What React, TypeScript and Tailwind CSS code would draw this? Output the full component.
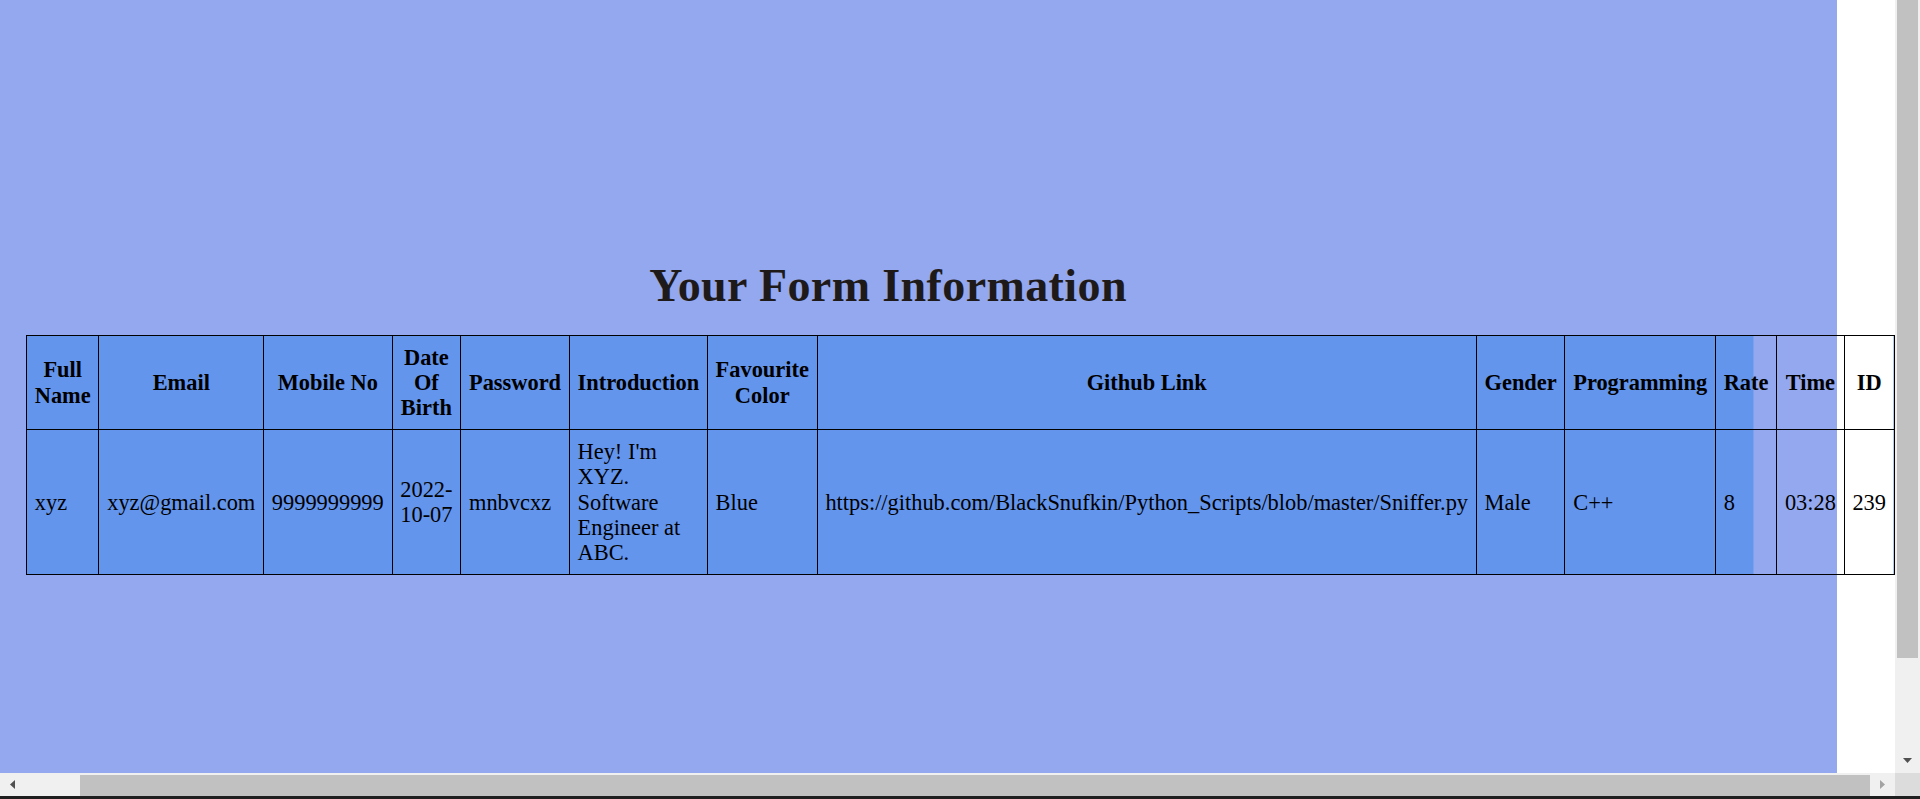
const headers = [
  "Full Name",
  "Email",
  "Mobile No",
  "Date Of Birth",
  "Password",
  "Introduction",
  "Favourite Color",
  "Github Link",
  "Gender",
  "Programming",
  "Rate",
  "Time",
  "ID",
]

const record = [
  "xyz",
  "xyz@gmail.com",
  "9999999999",
  "2022-10-07",
  "mnbvcxz",
  "Hey! I'm XYZ. Software Engineer at ABC.",
  "Blue",
  "https://github.com/BlackSnufkin/Python_Scripts/blob/master/Sniffer.py",
  "Male",
  "C++",
  "8",
  "03:28",
  "239",
]

function Arrow({ dir, color }: { dir: "left" | "right" | "down"; color: string }) {
  const points =
    dir === "left" ? "5,0 5,9 0,4.5" : dir === "right" ? "0,0 0,9 5,4.5" : "0,0 9,0 4.5,5"
  const w = dir === "down" ? 9 : 5
  const h = dir === "down" ? 5 : 9
  return (
    <svg width={w} height={h} viewBox={`0 0 ${w} ${h}`}>
      <polygon points={points} fill={color} />
    </svg>
  )
}

export default function App() {
  return (
    <div className="flex h-[799px] w-[1920px] flex-col overflow-hidden bg-white font-['Liberation_Serif','Times_New_Roman',serif] text-black">
      <div className="flex min-h-0 flex-1">
        {/* page */}
        <div className="min-w-0 flex-1 bg-white">
          <div className="h-full w-[1837px] bg-[#93a8ee] pt-[259px]">
            <h1 className="pr-[61px] text-center text-[46px] font-bold leading-[53px] tracking-[0.4px] text-[#1f1a1a]">
              Your Form Information
            </h1>

            <table className="ml-[26px] mt-[23px] w-px border-collapse bg-[linear-gradient(to_right,#6495ed_1727px,transparent_1727px)] text-[22.4px] leading-[25.35px]">
              <thead>
                <tr>
                  {headers.map((h) => (
                    <th key={h} className="border border-black px-[7.75px] py-[8.6px] text-center align-middle font-bold">
                      {h}
                    </th>
                  ))}
                </tr>
              </thead>
              <tbody>
                <tr>
                  {record.map((v, i) => (
                    <td key={i} className="border border-black px-[7.75px] py-[8.6px] text-left align-middle font-normal">
                      {v}
                    </td>
                  ))}
                </tr>
              </tbody>
            </table>
          </div>
        </div>

        {/* vertical scrollbar */}
        <div className="flex w-[25px] shrink-0 flex-col bg-[#f0f0f0]">
          <div className="mx-[2px] h-[658px] bg-[#c1c1c1]" />
          <div className="flex-1" />
          <div className="flex h-[25px] items-center justify-center">
            <Arrow dir="down" color="#505050" />
          </div>
        </div>
      </div>

      {/* horizontal scrollbar */}
      <div className="flex h-[23px] shrink-0 bg-[#f0f0f0]">
        <div className="flex w-[25px] items-center justify-center">
          <Arrow dir="left" color="#505050" />
        </div>
        <div className="ml-[55px] mt-[2px] w-[1790px] bg-[#c1c1c1]" />
        <div className="flex w-[25px] items-center justify-center">
          <Arrow dir="right" color="#a3a3a3" />
        </div>
        <div className="w-[25px] bg-[#dcdcdc]" />
      </div>
      <div className="h-[3px] shrink-0 bg-[#1f1f1f]" />
    </div>
  )
}
